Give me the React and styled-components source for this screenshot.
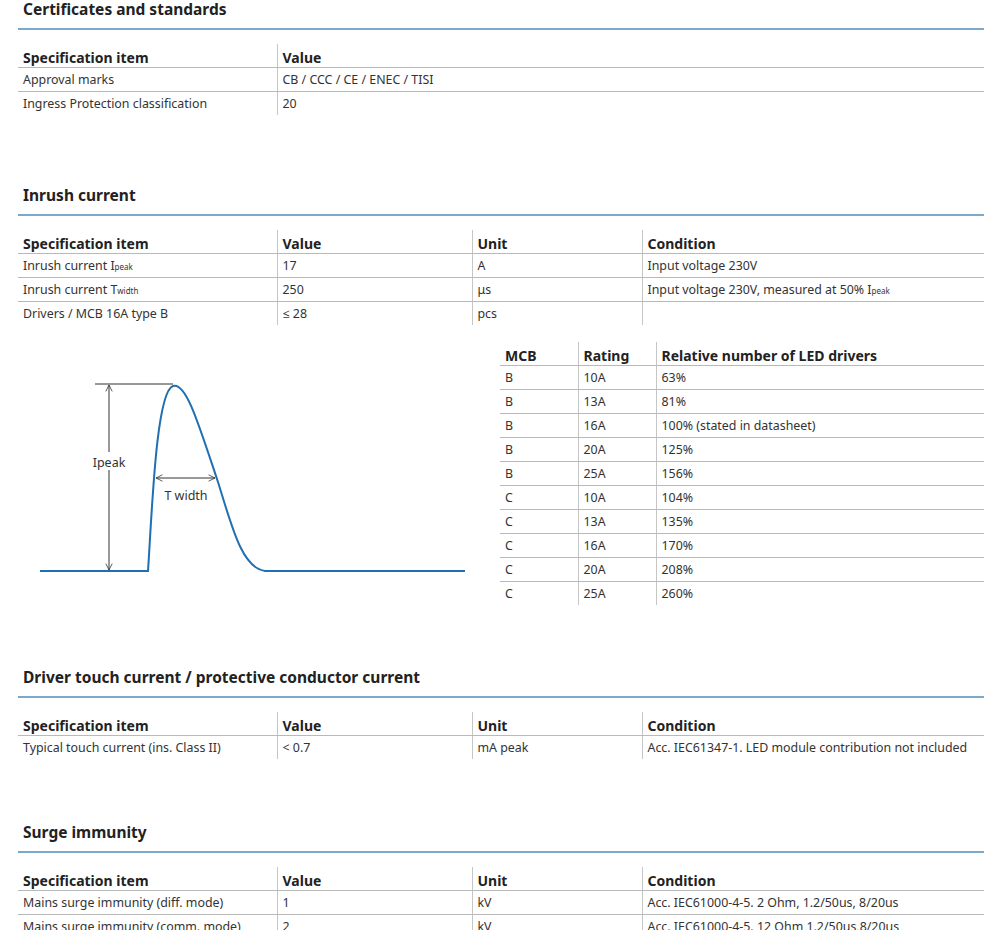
import styled, { createGlobalStyle } from 'styled-components';

const Global = createGlobalStyle`
  body { margin: 0; background: #fff; font-family: "Noto Sans", "Open Sans", sans-serif; color: #2b2b2b; }
`;

const Page = styled.div`
  padding: 0 22px 0 18px;
`;

const Section = styled.section`
  margin-bottom: ${p => p.$gap || 0}px;
`;

const Heading = styled.h2`
  margin: 0;
  height: 28px;
  padding-left: 5px;
  font-size: 15.5px;
  font-weight: 700;
  line-height: 18px;
  color: #222;
  border-bottom: 2px solid #7aa9cc;
  box-sizing: content-box;
`;

const Table = styled.table`
  width: 100%;
  margin-top: 14px;
  border-collapse: collapse;
  table-layout: fixed;
  font-size: 12.4px;
`;

const Th = styled.th`
  text-align: left;
  font-size: 14px;
  font-weight: 700;
  color: #222;
  height: 21px;
  padding: 2px 5px 0;
  vertical-align: bottom;
  border-bottom: 1px solid #b9b9b9;
  & + & { border-left: 1px solid #c6c6c6; }
`;

const Td = styled.td`
  height: 23px;
  padding: 0 5px;
  color: #333;
  & + & { border-left: 1px solid #c6c6c6; }
`;

const Tr = styled.tr`
  &:not(:last-child) td { border-bottom: 1px solid #b9b9b9; }
`;

const Sub = styled.span`
  font-size: 8px;
`;

const GraphRow = styled.div`
  display: flex;
  margin-top: 17px;
`;

const GraphBox = styled.div`
  width: 482px;
  flex: none;
`;

const McbTable = styled(Table)`
  margin-top: 0;
  flex: 1;
  width: auto;
`;

function Spec({ cols, widths, rows, as: T = Table }) {
  return (
    <T>
      <colgroup>
        {widths.map((w, i) => <col key={i} style={{ width: w }} />)}
      </colgroup>
      <thead>
        <tr>{cols.map(c => <Th key={c}>{c}</Th>)}</tr>
      </thead>
      <tbody>
        {rows.map((r, i) => (
          <Tr key={i}>{r.map((c, j) => <Td key={j}>{c}</Td>)}</Tr>
        ))}
      </tbody>
    </T>
  );
}

const W4 = ['259px', '195px', '170px', 'auto'];

function Graph() {
  return (
    <svg width="482" height="256" viewBox="0 0 482 256">
      <defs>
        <marker id="ar" viewBox="0 0 10 10" refX="9" refY="5" markerWidth="8" markerHeight="8" orient="auto-start-reverse">
          <path d="M1 1 L9 5 L1 9" fill="none" stroke="#333" strokeWidth="1" />
        </marker>
      </defs>
      <line x1="77" y1="42" x2="155" y2="42" stroke="#333" strokeWidth="1" />
      <line x1="91" y1="43" x2="91" y2="110" stroke="#333" strokeWidth="1" markerStart="url(#ar)" />
      <line x1="91" y1="128" x2="91" y2="228" stroke="#333" strokeWidth="1" markerEnd="url(#ar)" />
      <text x="91" y="125" textAnchor="middle" fontSize="12.5" fill="#333" fontFamily="Noto Sans, sans-serif">Ipeak</text>
      <line x1="138" y1="136" x2="197" y2="136" stroke="#333" strokeWidth="1" markerStart="url(#ar)" markerEnd="url(#ar)" />
      <text x="168" y="158" textAnchor="middle" fontSize="12.5" fill="#333" fontFamily="Noto Sans, sans-serif">T width</text>
      <path
        d="M22 229 H130 C134 170, 138 50, 155 44 C168 40, 180 80, 200 140 C214 185, 224 226, 247 229 H447"
        fill="none" stroke="#1f6fb2" strokeWidth="2" />
    </svg>
  );
}

export default function App() {
  return (
    <Page>
      <Global />
      <Section $gap={71}>
        <Heading>Certificates and standards</Heading>
        <Spec
          cols={['Specification item', 'Value']}
          widths={['259px', 'auto']}
          rows={[
            ['Approval marks', 'CB / CCC / CE / ENEC / TISI'],
            ['Ingress Protection classification', '20'],
          ]}
        />
      </Section>
      <Section $gap={63}>
        <Heading>Inrush current</Heading>
        <Spec
          cols={['Specification item', 'Value', 'Unit', 'Condition']}
          widths={W4}
          rows={[
            [<>Inrush current I<Sub>peak</Sub></>, '17', 'A', 'Input voltage 230V'],
            [<>Inrush current T<Sub>width</Sub></>, '250', 'μs', <>Input voltage 230V, measured at 50% I<Sub>peak</Sub></>],
            ['Drivers / MCB 16A type B', '≤ 28', 'pcs', ''],
          ]}
        />
        <GraphRow>
          <GraphBox><Graph /></GraphBox>
          <Spec
            as={McbTable}
            cols={['MCB', 'Rating', 'Relative number of LED drivers']}
            widths={['78px', '78px', 'auto']}
            rows={[
              ['B', '10A', '63%'], ['B', '13A', '81%'], ['B', '16A', '100% (stated in datasheet)'],
              ['B', '20A', '125%'], ['B', '25A', '156%'], ['C', '10A', '104%'], ['C', '13A', '135%'],
              ['C', '16A', '170%'], ['C', '20A', '208%'], ['C', '25A', '260%'],
            ]}
          />
        </GraphRow>
      </Section>
      <Section $gap={64}>
        <Heading>Driver touch current / protective conductor current</Heading>
        <Spec
          cols={['Specification item', 'Value', 'Unit', 'Condition']}
          widths={W4}
          rows={[
            ['Typical touch current (ins. Class II)', '< 0.7', 'mA peak', 'Acc. IEC61347-1. LED module contribution not included'],
          ]}
        />
      </Section>
      <Section>
        <Heading>Surge immunity</Heading>
        <Spec
          cols={['Specification item', 'Value', 'Unit', 'Condition']}
          widths={W4}
          rows={[
            ['Mains surge immunity (diff. mode)', '1', 'kV', 'Acc. IEC61000-4-5. 2 Ohm, 1.2/50us, 8/20us'],
            ['Mains surge immunity (comm. mode)', '2', 'kV', 'Acc. IEC61000-4-5. 12 Ohm 1.2/50us,8/20us'],
          ]}
        />
      </Section>
    </Page>
  );
}
